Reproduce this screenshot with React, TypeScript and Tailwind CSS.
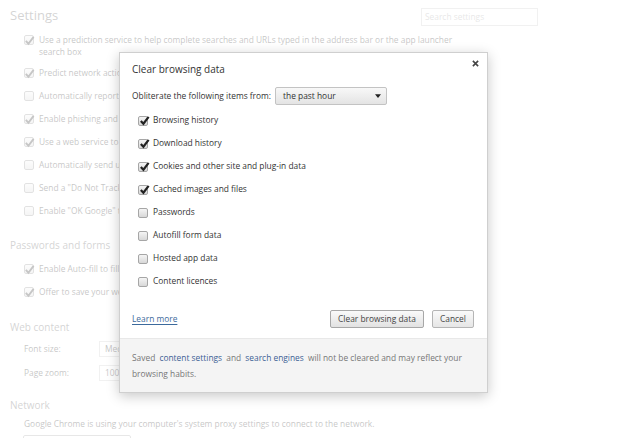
const font = { fontFamily: '"Open Sans", "Noto Sans", sans-serif' };

function BgCheck({ checked }: { checked: boolean }) {
  return (
    <span className="relative block mt-[1px] w-[10px] h-[10px] shrink-0 border border-[#999] rounded-[2px] bg-gradient-to-b from-[#f4f4f4] to-[#dcdcdc]">
      {checked && (
        <svg viewBox="0 0 12 12" className="absolute -top-[1px] -left-[1px] w-[11px] h-[11px]">
          <path d="M2 6.5 L4.8 9.5 L10.5 2" fill="none" stroke="#333" strokeWidth="2" />
        </svg>
      )}
    </span>
  );
}

function BgRow({ checked, children, pb = "pb-[6px]" }: { checked: boolean; children: React.ReactNode; pb?: string }) {
  return (
    <div className={`flex items-start gap-[5px] pl-[24px] pt-[5px] leading-[12px] ${pb}`}>
      <BgCheck checked={checked} />
      <span className="text-[8.4px] leading-[12px] text-[#333]">{children}</span>
    </div>
  );
}

function Check({ checked, label }: { checked: boolean; label: string }) {
  return (
    <div className="flex items-center h-[23px] pl-[6px]">
      <span className="relative block w-[10px] h-[10px] shrink-0 border border-[#a6a6a6] rounded-[2px] bg-gradient-to-b from-[#f5f5f5] to-[#d8d8d8]">
        {checked && (
          <svg viewBox="0 0 12 12" className="absolute -top-[2px] left-[0px] w-[11px] h-[11px]">
            <path d="M2 6.5 L4.8 9.5 L10.5 2" fill="none" stroke="#222" strokeWidth="2.4" />
          </svg>
        )}
      </span>
      <span className="ml-[5px] text-[8.4px] text-[#333]">{label}</span>
    </div>
  );
}

export default function App() {
  return (
    <div className="relative w-[630px] h-[438px] overflow-hidden bg-white" style={font}>
      {/* Settings page behind the dialog */}
      <div className="px-[10px] pt-[4px]">
        <div className="flex items-start justify-between h-[22px]">
          <h1 className="text-[13px] leading-[22px] text-[#666]">Settings</h1>
          <div className="mr-[82px] mt-[4px] w-[117px] h-[18px] border border-[#ccc] px-[3px] text-[8.4px] leading-[16px] text-[#aaa]">
            Search settings
          </div>
        </div>
        <div className="-ml-[10px] mt-[3px]">
          <BgRow checked pb="pb-[4px]">
            Use a prediction service to help complete searches and URLs typed in the address bar or the app launcher
            <br />
            search box
          </BgRow>
          <BgRow checked>Predict network actions to improve page load performance</BgRow>
          <BgRow checked={false}>Automatically report details of possible security incidents to Google</BgRow>
          <BgRow checked>Enable phishing and malware protection</BgRow>
          <BgRow checked>Use a web service to help resolve spelling errors</BgRow>
          <BgRow checked={false}>Automatically send usage statistics and crash reports to Google</BgRow>
          <BgRow checked={false}>Send a "Do Not Track" request with your browsing traffic</BgRow>
          <BgRow checked={false}>Enable "OK Google" to start a voice search</BgRow>
        </div>
        <h2 className="mt-[13px] text-[10px] leading-[18px] text-[#666]">Passwords and forms</h2>
        <div className="-ml-[10px] mt-[4px]">
          <BgRow checked>Enable Auto-fill to fill out web forms in a single click</BgRow>
          <BgRow checked>Offer to save your web passwords</BgRow>
        </div>
        <h2 className="mt-[14px] text-[10px] leading-[18px] text-[#666]">Web content</h2>
        <div className="pl-[14px] mt-[5px] flex flex-col gap-[8px]">
          <div className="flex items-center h-[16px]">
            <span className="w-[75px] text-[8.4px] text-[#333]">Font size:</span>
            <span className="w-[120px] h-[16px] border border-[#ccc] px-[5px] text-[8.4px] leading-[14px] text-[#333]">
              Medium
            </span>
          </div>
          <div className="flex items-center h-[16px]">
            <span className="w-[75px] text-[8.4px] text-[#333]">Page zoom:</span>
            <span className="w-[120px] h-[16px] border border-[#ccc] px-[5px] text-[8.4px] leading-[14px] text-[#333]">
              100%
            </span>
          </div>
        </div>
        <h2 className="mt-[15px] text-[10px] leading-[18px] text-[#666]">Network</h2>
        <p className="pl-[14px] mt-[4px] text-[8.4px] leading-[12px] text-[#333]">
          Google Chrome is using your computer's system proxy settings to connect to the network.
        </p>
        <div className="ml-[13px] mt-[5px] w-[108px] h-[20px] border border-[#aaa] rounded-[2px]" />
      </div>

      {/* Faded overlay */}
      <div className="absolute inset-0 bg-white/[0.72]" />

      {/* Dialog */}
      <div className="absolute left-[119px] top-[52px] w-[369px] bg-white border border-[#cfcfcf] shadow-[0_3px_12px_rgba(0,0,0,0.22)]">
        <svg viewBox="0 0 8 8" className="absolute top-[7px] right-[8px] w-[7px] h-[7px]">
          <path d="M1 1 L7 7 M7 1 L1 7" stroke="#444" strokeWidth="1.8" />
        </svg>
        <div className="px-[12px]">
          <div className="pt-[7px] text-[10px] leading-[18px] text-[#333]">Clear browsing data</div>
          <div className="mt-[9px] flex items-center h-[18px]">
            <span className="text-[8.4px] text-[#333]">Obliterate the following items from:</span>
            <div className="ml-[4px] w-[112px] h-[18px] flex items-center justify-between border border-[#c3c3c3] rounded-[2px] bg-gradient-to-b from-[#f8f8f8] to-[#e4e4e4] pl-[7px] pr-[5px]">
              <span className="text-[8.4px] text-[#333]">the past hour</span>
              <svg viewBox="0 0 8 5" className="w-[6px] h-[4px]">
                <path d="M0 0 H8 L4 5 Z" fill="#222" />
              </svg>
            </div>
          </div>
          <div className="mt-[4px]">
            <Check checked label="Browsing history" />
            <Check checked label="Download history" />
            <Check checked label="Cookies and other site and plug-in data" />
            <Check checked label="Cached images and files" />
            <Check checked={false} label="Passwords" />
            <Check checked={false} label="Autofill form data" />
            <Check checked={false} label="Hosted app data" />
            <Check checked={false} label="Content licences" />
          </div>
          <div className="mt-[17px] flex items-center justify-between h-[18px] pr-[1px]">
            <a className="text-[8.4px] text-[#3c6a9c] underline underline-offset-2">Learn more</a>
            <div className="flex gap-[8px]">
              <button className="h-[18px] w-[94px] border border-[#a7a7a7] rounded-[2px] bg-gradient-to-b from-[#fafafa] to-[#e2e2e2] text-[8.4px] leading-[16px] text-[#444]">
                Clear browsing data
              </button>
              <button className="h-[18px] w-[42px] border border-[#b5b5b5] rounded-[2px] bg-gradient-to-b from-[#fafafa] to-[#e6e6e6] text-[8.4px] leading-[16px] text-[#444]">
                Cancel
              </button>
            </div>
          </div>
        </div>
        <div className="mt-[10px] border-t border-[#e8e8e8] bg-[#f4f4f4] px-[12px] pt-[11px] pb-[10px] text-[8.4px] leading-[16px] text-[#777]">
          Saved <span className="mx-[2px] text-[#3c5f94]">content settings</span> and{" "}
          <span className="mx-[2px] text-[#3c5f94]">search engines</span> will not be cleared and may reflect your
          <br />
          browsing habits.
        </div>
      </div>
    </div>
  );
}
